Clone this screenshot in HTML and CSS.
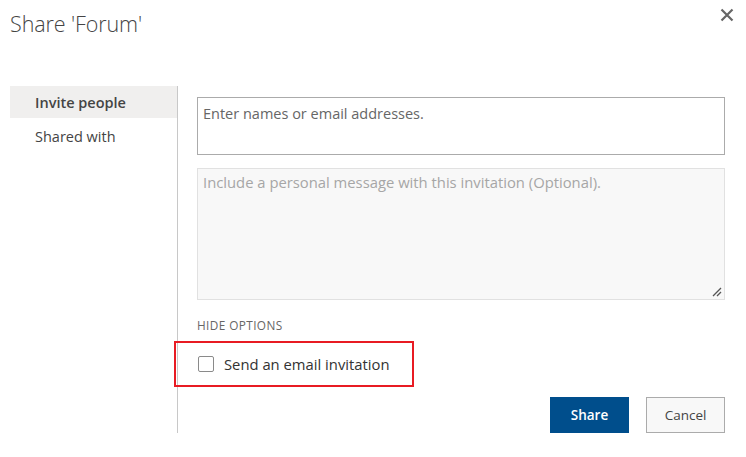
FILE: index.html
```html
<!DOCTYPE html>
<html>
<head>
<meta charset="utf-8">
<link rel="stylesheet" href="styles.css">
</head>
<body>
<div class="dialog">
  <div class="header">
    <h1 class="title">Share 'Forum'</h1>
    <button class="close" aria-label="Close">
      <svg width="14" height="14" viewBox="0 0 14 14"><path d="M1.5 1.5 L12.5 12.5 M12.5 1.5 L1.5 12.5" stroke="#666" stroke-width="2.2" fill="none"/></svg>
    </button>
  </div>
  <div class="main">
    <nav class="nav">
      <div class="nav-item active">Invite people</div>
      <div class="nav-item">Shared with</div>
    </nav>
    <div class="content">
      <div class="people-input">Enter names or email addresses.</div>
      <div class="message">
        <span class="placeholder">Include a personal message with this invitation (Optional).</span>
        <svg class="grip" width="11" height="11" viewBox="0 0 11 11"><path d="M10 2 L2 10 M10 6 L6 10" stroke="#555" stroke-width="1.3" fill="none"/></svg>
      </div>
      <div class="hide-options">HIDE OPTIONS</div>
      <div class="option-row">
        <span class="checkbox"></span>
        <span class="option-label">Send an email invitation</span>
      </div>
      <div class="actions">
        <button class="btn primary">Share</button>
        <button class="btn">Cancel</button>
      </div>
    </div>
  </div>
</div>
</body>
</html>
```
FILE: styles.css
```css
html, body {
  margin: 0;
  padding: 0;
  background: #fff;
}
body {
  font-family: "Open Sans", "Noto Sans", sans-serif;
  color: #333;
  width: 746px;
  height: 457px;
  overflow: hidden;
}
.dialog {
  display: flex;
  flex-direction: column;
}
.header {
  display: flex;
  justify-content: space-between;
  align-items: flex-start;
  height: 86px;
}
.title {
  margin: 0;
  padding: 9px 0 0 10px;
  font-size: 21.5px;
  font-weight: 300;
  color: #444;
  line-height: 29px;
  letter-spacing: -0.1px;
}
.close {
  margin: 8px 12px 0 0;
  padding: 0;
  border: none;
  background: none;
  width: 14px;
  height: 14px;
  display: flex;
}
.main {
  display: flex;
  height: 347px;
}
.nav {
  margin-left: 10px;
  width: 167px;
  border-right: 1px solid #c8c8c8;
  display: flex;
  flex-direction: column;
  gap: 2px;
}
.nav-item {
  height: 32px;
  line-height: 34px;
  padding-left: 25px;
  font-size: 14.5px;
  color: #444;
}
.nav-item.active {
  background: #f0efee;
  font-weight: 600;
}
.content {
  padding: 11px 0 0 19px;
  display: flex;
  flex-direction: column;
  width: 528px;
}
.people-input {
  height: 56px;
  border: 1px solid #ababab;
  font-size: 14.5px;
  color: #666;
  padding: 0 0 0 5px;
  line-height: 31px;
}
.message {
  position: relative;
  margin-top: 13px;
  height: 131px;
  border: 1px solid #e1e1e1;
  background: #f8f8f8;
  padding-left: 5px;
  font-size: 14.8px;
  line-height: 27px;
  color: #a6a6a6;
}
.grip {
  position: absolute;
  right: 2px;
  bottom: 2px;
}
.hide-options {
  margin-top: 16px;
  font-size: 11.8px;
  color: #666;
  line-height: 18px;
  letter-spacing: 0.4px;
}
.option-row {
  margin-top: 7px;
  margin-left: -23px;
  width: 214px;
  height: 42px;
  border: 2px solid #e81b23;
  display: flex;
  align-items: center;
  padding-left: 22px;
  box-sizing: content-box;
}
.checkbox {
  width: 14px;
  height: 14px;
  border: 1px solid #8a8a8a;
  border-radius: 2px;
  background: #fff;
}
.option-label {
  margin-left: 10px;
  font-size: 14.8px;
  color: #333;
  white-space: nowrap;
}
.actions {
  margin-top: 10px;
  display: flex;
  justify-content: flex-end;
  gap: 17px;
}
.btn {
  width: 79px;
  height: 36px;
  border: 1px solid #ababab;
  background: #f8f8f8;
  font-family: inherit;
  font-size: 13.5px;
  color: #444;
  padding: 0;
}
.btn.primary {
  background: #004e8c;
  border-color: #004e8c;
  color: #fff;
  font-weight: 600;
}
```
